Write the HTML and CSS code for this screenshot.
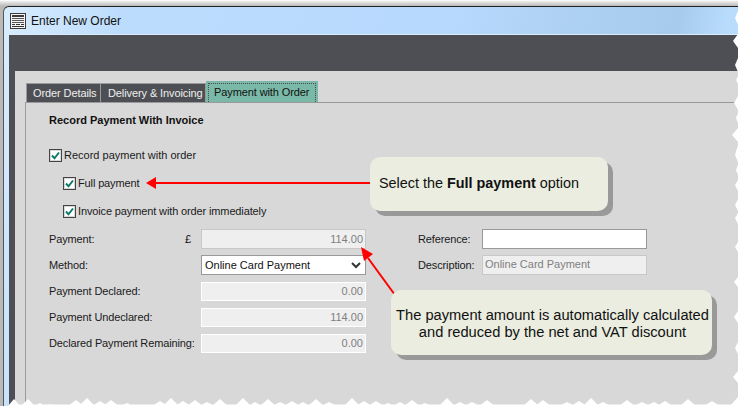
FILE: index.html
```html
<!DOCTYPE html>
<html lang="en">
<head>
<meta charset="utf-8">
<title>Enter New Order</title>
<link rel="stylesheet" href="styles.css">
</head>
<body>
<div class="screen">
  <div class="window">
    <header class="titlebar">
      <svg class="appicon" width="16" height="16" viewBox="0 0 16 16">
        <rect x="0" y="0" width="16" height="16" fill="#3c3c3c"/>
        <rect x="1" y="1" width="14" height="14" fill="#f4f4f4"/>
        <rect x="2" y="2" width="12" height="2" fill="#3c3c3c"/>
        <path d="M2 5.5h12M2 7.5h12M2 9.5h12" stroke="#555" stroke-width="1"/>
        <path d="M2 11.5h3M6 11.5h4M11 11.5h3M2 13.5h12" stroke="#333" stroke-width="1"/>
      </svg>
      <span class="titletext">Enter New Order</span>
    </header>
    <div class="chrome">
      <div class="content">
        <nav class="tabs">
          <span class="tab tab-a">Order Details</span>
          <span class="tab tab-b">Delivery &amp; Invoicing</span>
          <span class="tab-active"><span class="tab-focus">Payment with Order</span></span>
        </nav>
        <section class="panel">
          <h2 class="heading">Record Payment With Invoice</h2>
          <div class="checks">
            <label class="check check-main"><span class="box"><svg viewBox="0 0 9 9" width="9" height="9"><path d="M1 4.5l2.5 2.8L8 1.5" fill="none" stroke="#0b7a6a" stroke-width="2"/></svg></span>Record payment with order</label>
            <label class="check check-sub"><span class="box"><svg viewBox="0 0 9 9" width="9" height="9"><path d="M1 4.5l2.5 2.8L8 1.5" fill="none" stroke="#0b7a6a" stroke-width="2"/></svg></span>Full payment</label>
            <label class="check check-sub"><span class="box"><svg viewBox="0 0 9 9" width="9" height="9"><path d="M1 4.5l2.5 2.8L8 1.5" fill="none" stroke="#0b7a6a" stroke-width="2"/></svg></span>Invoice payment with order immediately</label>
          </div>
          <div class="fields">
            <span class="lbl">Payment:</span><span class="cur">£</span><span class="input ro num">114.00</span>
            <span class="lbl lbl-r">Reference:</span><span class="input edit"></span>

            <span class="lbl">Method:</span><span class="cur"></span>
            <span class="input sel">Online Card Payment<svg class="chev" width="10" height="7" viewBox="0 0 10 7"><path d="M1 1l4 4 4-4" fill="none" stroke="#333" stroke-width="2"/></svg></span>
            <span class="lbl lbl-r">Description:</span><span class="input ro desc">Online Card Payment</span>

            <span class="lbl">Payment Declared:</span><span class="cur"></span><span class="input ro2 num">0.00</span><span></span><span></span>
            <span class="lbl">Payment Undeclared:</span><span class="cur"></span><span class="input ro2 num">114.00</span><span></span><span></span>
            <span class="lbl">Declared Payment Remaining:</span><span class="cur"></span><span class="input ro2 num">0.00</span><span></span><span></span>
          </div>
        </section>
      </div>
    </div>
  </div>

  <svg class="arrows" width="740" height="406" viewBox="0 0 740 406">
    <path d="M156 183H372" stroke="#f00" stroke-width="2" fill="none"/>
    <path d="M146 183l10-6v12z" fill="#f00"/>
    <path d="M395 295L368 258" stroke="#f00" stroke-width="2" fill="none"/>
    <path d="M361 247l12 7-9 7z" fill="#f00"/>
  </svg>

  <div class="callout callout-a">Select the <b>Full payment</b> option</div>
  <div class="callout callout-b">The payment amount is automatically calculated<br>and reduced by the net and VAT discount</div>

  <svg class="torn" width="740" height="406" viewBox="0 0 740 406">
    <path fill="#fff" d="M10 404.5H740V406H10Z
      M8 406L14 399L20 406ZM21 406L28 399L35 406ZM34 406L40 403L46 406ZM44 406L50 404L56 406ZM68 406L76 400L84 406ZM79 406L87 398L95 406ZM92 406L100 401L108 406ZM103 406L111 400L119 406ZM120 406L127 403L134 406ZM152 406L160 401L168 406ZM163 406L171 398L179 406ZM175 406L183 401L191 406ZM187 406L195 400L203 406ZM199 406L207 402L215 406ZM212 406L220 399L228 406ZM235 406L243 398L251 406Z
      M248 406L255 402L262 406ZM260 406L268 399L276 406ZM272 406L280 402L288 406ZM284 406L292 401L300 406ZM296 406L303 402L310 406ZM308 406L316 399L324 406ZM321 406L329 402L337 406ZM344 406L352 398L360 406ZM356 406L364 401L372 406ZM368 406L376 401L384 406ZM381 406L388 403L395 406ZM393 406L400 402L407 406ZM404 406L412 400L420 406ZM418 406L425 403L432 406ZM439 406L447 398L455 406ZM452 406L460 402L468 406ZM464 406L472 402L480 406ZM479 406L487 400L495 406Z
      M523 406L531 399L539 406ZM535 406L543 400L551 406ZM559 406L567 402L575 406ZM571 406L579 401L587 406ZM583 406L591 398L599 406ZM595 406L603 402L611 406ZM619 406L627 400L635 406ZM634 406L642 402L650 406ZM646 406L654 402L662 406ZM657 406L665 401L673 406ZM680 406L688 399L696 406ZM704 406L712 401L720 406ZM730 406L738 397L740 399V406Z
      M738 0H740V406H738Z
      M738 11L735 18L738 25ZM738 34L733 41L738 48ZM738 58L735 65L738 72ZM738 76L736 80L738 84ZM738 96L734 103L738 110ZM738 113L736 118L738 123ZM738 128L732 135L738 142ZM738 145L735 155L738 162ZM738 165L736 170L738 175ZM738 180L735 185L738 191ZM738 199L735 205L738 211ZM738 213L735 218L738 224ZM738 242L735 247L738 252ZM738 277L734 282L738 287ZM738 311L734 317L738 323ZM738 342L735 348L738 354ZM738 371L733 377L738 383Z"/>
  </svg>
</div>
</body>
</html>
```

FILE: styles.css
```css
* { box-sizing: border-box; }
html, body { margin: 0; padding: 0; background: #fff; }
.screen {
  position: relative;
  width: 740px;
  height: 406px;
  overflow: hidden;
  font-family: "Liberation Sans", Arial, sans-serif;
  color: #111;
  background: linear-gradient(#fff 0, #e4e4e4 2px, #b9b9b9 6px);
}
.window {
  height: 400px;
  margin: 6px 0 0 3px;
  border-top: 1px solid #222;
  border-left: 1px solid #555;
  border-radius: 6px 0 0 0;
  display: flex;
  flex-direction: column;
  background: linear-gradient(100deg, #d8ecfd 0, #bcdcfd 15%, #b7d9fd 55%, #abcff0 75%, #a6cbec 84%, #b9dcfd 90%);
  overflow: hidden;
  padding-left: 5px;
}
.titlebar {
  height: 28px;
  flex: none;
  margin-left: -1px;
  padding-left: 2px;
  display: flex;
  align-items: center;
  gap: 5px;
  border-bottom: 1px solid #dcebfa;
}
.appicon { flex: none; }
.titletext { font-size: 12px; color: #111; }
.chrome {
  flex: 1;
  background: #4e4f54;
  padding: 36px 0 0 6px;
}
.content {
  height: 100%;
  background: #d8d8d8;
  padding: 10px 0 0 10px;
  display: flex;
  flex-direction: column;
}
.tabs {
  display: flex; height: 21px; flex: none; align-items: flex-end; padding-left: 1px;
  font-size: 11px; letter-spacing: -0.1px;
}
.tab {
  height: 19px;
  padding-left: 6px;
  background: #4e4f54;
  color: #efefef;
  line-height: 18px;
  border-top: 1px solid #9a9a9a;
  border-right: 1px solid #9a9a9a;
  white-space: nowrap;
}
.tab-a { width: 75px; border-left: 1px solid #9a9a9a; }
.tab-b { width: 105px; padding-left: 7px; }
.tab-active {
  width: 112px;
  height: 21px;
  padding: 2px 2px 0;
  background: #7ab9a8;
  color: #111;
  white-space: nowrap;
}
.tab-focus { display: block; height: 19px; padding: 0 0 0 5px; border: 1px dotted #4a4a4a; border-bottom: 0; line-height: 16px; }
.panel {
  flex: 1;
  border-top: 1px solid #9a9a9a;
  border-left: 1px solid #9a9a9a;
  padding: 10px 0 0 23px;
  font-size: 11px;
  letter-spacing: -0.13px;
}
.heading { margin: 0; font-size: 11px; line-height: 14px; font-weight: bold; color: #111; letter-spacing: 0; }
.checks { margin-top: 14px; display: flex; flex-direction: column; }
.check { height: 28px; display: flex; align-items: center; gap: 2px; color: #1a1a1a; }
.check-main { letter-spacing: 0; }
.check-sub { padding-left: 14px; }
.box {
  width: 13px; height: 13px; border: 1px solid #444; background: #fff;
  display: flex; align-items: center; justify-content: center; flex: none;
  box-shadow: inset 0 0 0 1px #d8d8d8;
}
.fields {
  margin-top: 1px;
  display: grid;
  grid-template-columns: 136px 16px 165px 116px 165px;
  grid-auto-rows: 26px;
  align-items: center;
}
.lbl { color: #1a1a1a; white-space: nowrap; }
.lbl-r { padding-left: 52px; }
.input { height: 20px; display: flex; align-items: center; border: 1px solid #c8c8c8; line-height: 16px; white-space: nowrap; letter-spacing: 0; }
.ro { background: #efefef; color: #808080; }
.ro2 { background: #efefef; color: #808080; height: 19px; border-color: #fff; }
.num { justify-content: flex-end; padding-right: 2px; }
.edit { background: #fff; border-color: #999; }
.sel { background: #fff; border-color: #999; color: #111; padding-left: 3px; justify-content: space-between; padding-right: 4px; }
.desc { padding: 0 0 3px 2px; }
.chev { flex: none; }
.arrows, .torn { position: absolute; left: 0; top: 0; pointer-events: none; }
.callout {
  position: absolute;
  background: #eaeddf;
  border-radius: 10px;
  box-shadow: 5px 5px 0 #999;
  line-height: 17px;
  color: #111;
}
.callout-a { left: 370px; top: 157px; width: 238px; height: 54px; padding: 18px 0 0 9px; font-size: 14.4px; }
.callout-b { left: 391px; top: 290px; width: 321px; height: 65px; padding: 17px 0 0 2px; text-align: center; font-size: 14.67px; }
```
